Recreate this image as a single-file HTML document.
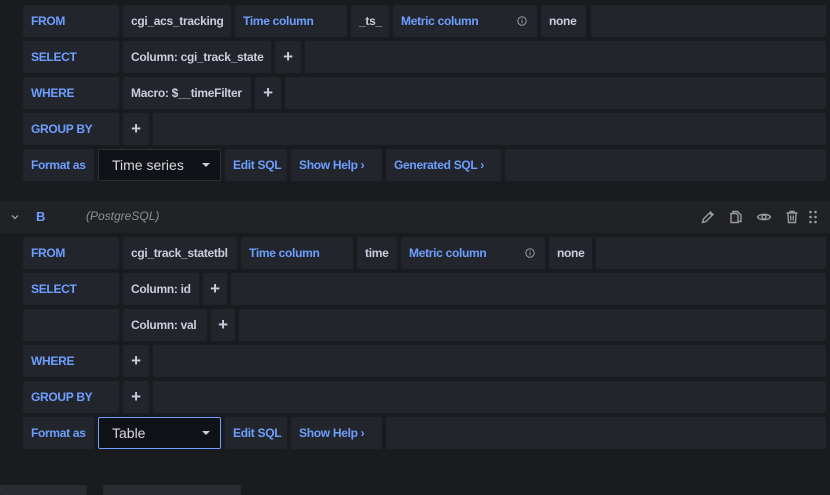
<!DOCTYPE html>
<html><head><meta charset="utf-8"><style>
*{margin:0;padding:0;box-sizing:border-box}
body{width:830px;height:491px;background:#1a1b1f;overflow:hidden;position:relative;font-family:"Liberation Sans",sans-serif;font-size:12px;font-weight:bold;color:#ccccdc;letter-spacing:-0.3px}
.c{position:absolute;height:32px;background:#22252b;border-radius:2px;line-height:32px;padding-left:8px;white-space:nowrap}
.l{color:#6e9fff}
.p{text-align:center;padding-left:0;font-size:17px}
.sel{position:absolute;height:32px;background:#111217;border:1px solid #2c2f35;border-radius:2px;line-height:30px;padding-left:13px;font-size:14px;font-weight:normal;color:#d8d9de;letter-spacing:0}
.sel .a{position:absolute;right:10px;top:13px;width:0;height:0;border-left:4px solid transparent;border-right:4px solid transparent;border-top:4px solid #ccccdc}
.hdr{position:absolute;left:0;top:201px;width:830px;height:32px;background:#202226}
.i{position:absolute;top:8px}
</style></head><body>
<div class="c l" style="left:23px;top:5px;width:96px">FROM</div>
<div class="c" style="left:123px;top:5px;width:108px">cgi_acs_tracking</div>
<div class="c l" style="left:235px;top:5px;width:112px">Time column</div>
<div class="c" style="left:351px;top:5px;width:38px">_ts_</div>
<div class="c l" style="left:393px;top:5px;width:144px">Metric column<svg style="position:absolute;left:124px;top:11px" width="10" height="10" viewBox="0 0 10 10"><circle cx="5" cy="5" r="4.2" fill="none" stroke="#9a9ba1" stroke-width="1"/><rect x="4.5" y="4.3" width="1" height="3" fill="#9a9ba1"/><rect x="4.5" y="2.5" width="1" height="1" fill="#9a9ba1"/></svg></div>
<div class="c" style="left:541px;top:5px;width:45px">none</div>
<div class="c" style="left:591px;top:5px;width:235px"></div>

<div class="c l" style="left:23px;top:41px;width:96px">SELECT</div>
<div class="c" style="left:123px;top:41px;width:148px">Column: cgi_track_state</div>
<div class="c p" style="left:275px;top:41px;width:26px">+</div>
<div class="c" style="left:305px;top:41px;width:521px"></div>

<div class="c l" style="left:23px;top:77px;width:96px">WHERE</div>
<div class="c" style="left:123px;top:77px;width:128px">Macro: $__timeFilter</div>
<div class="c p" style="left:255px;top:77px;width:26px">+</div>
<div class="c" style="left:285px;top:77px;width:541px"></div>

<div class="c l" style="left:23px;top:113px;width:96px">GROUP BY</div>
<div class="c p" style="left:123px;top:113px;width:26px">+</div>
<div class="c" style="left:153px;top:113px;width:673px"></div>

<div class="c l" style="left:23px;top:149px;width:71px">Format as</div>
<div class="sel" style="left:98px;top:149px;width:123px">Time series<span class="a"></span></div>
<div class="c l" style="left:225px;top:149px;width:62px">Edit SQL</div>
<div class="c l" style="left:291px;top:149px;width:91px">Show Help ›</div>
<div class="c l" style="left:386px;top:149px;width:115px">Generated SQL ›</div>
<div class="c" style="left:505px;top:149px;width:321px"></div>

<div class="hdr">
<svg style="position:absolute;left:11px;top:13px" width="8" height="6" viewBox="0 0 8 6"><path d="M1 1.5L4 4.5L7 1.5" fill="none" stroke="#9a9ba1" stroke-width="1.3"/></svg>
<span style="position:absolute;left:36px;top:8px;color:#6e9fff;font-size:13px">B</span>
<span style="position:absolute;left:86px;top:8px;color:#8e8f96;font-style:italic;font-weight:normal;letter-spacing:0">(PostgreSQL)</span>
<svg class="i" style="left:700px" width="16" height="16" viewBox="0 0 16 16" fill="none" stroke="#9a9ba1" stroke-width="1.4"><path d="M2.5 13.5l1-3.5 7-7 2.5 2.5-7 7z M9.5 4l2.5 2.5"/></svg>
<svg class="i" style="left:728px" width="16" height="16" viewBox="0 0 16 16" fill="none" stroke="#9a9ba1" stroke-width="1.4"><path d="M5 4V2.5h4.5L13 6v6.5H10"/><path d="M3 4.5h5.5L10 6v7.5H3z"/></svg>
<svg class="i" style="left:756px" width="16" height="16" viewBox="0 0 16 16" fill="none" stroke="#9a9ba1" stroke-width="1.4"><path d="M1.5 8C3.5 4.5 12.5 4.5 14.5 8 12.5 11.5 3.5 11.5 1.5 8z"/><circle cx="8" cy="8" r="2"/></svg>
<svg class="i" style="left:784px" width="16" height="16" viewBox="0 0 16 16" fill="none" stroke="#9a9ba1" stroke-width="1.4"><path d="M2.5 4h11M6 4V2.5h4V4M4 4l.5 9.5h7L12 4M6.7 6.5v5M9.3 6.5v5"/></svg>
<svg class="i" style="left:807px" width="12" height="16" viewBox="0 0 12 16" fill="#9a9ba1"><circle cx="3.5" cy="3" r="1.3"/><circle cx="8.5" cy="3" r="1.3"/><circle cx="3.5" cy="8" r="1.3"/><circle cx="8.5" cy="8" r="1.3"/><circle cx="3.5" cy="13" r="1.3"/><circle cx="8.5" cy="13" r="1.3"/></svg>
</div>

<div class="c l" style="left:23px;top:237px;width:96px">FROM</div>
<div class="c" style="left:123px;top:237px;width:114px">cgi_track_statetbl</div>
<div class="c l" style="left:241px;top:237px;width:112px">Time column</div>
<div class="c" style="left:357px;top:237px;width:40px">time</div>
<div class="c l" style="left:401px;top:237px;width:144px">Metric column<svg style="position:absolute;left:124px;top:11px" width="10" height="10" viewBox="0 0 10 10"><circle cx="5" cy="5" r="4.2" fill="none" stroke="#9a9ba1" stroke-width="1"/><rect x="4.5" y="4.3" width="1" height="3" fill="#9a9ba1"/><rect x="4.5" y="2.5" width="1" height="1" fill="#9a9ba1"/></svg></div>
<div class="c" style="left:549px;top:237px;width:43px">none</div>
<div class="c" style="left:596px;top:237px;width:230px"></div>

<div class="c l" style="left:23px;top:273px;width:96px">SELECT</div>
<div class="c" style="left:123px;top:273px;width:76px">Column: id</div>
<div class="c p" style="left:203px;top:273px;width:24px">+</div>
<div class="c" style="left:231px;top:273px;width:595px"></div>

<div class="c" style="left:23px;top:309px;width:96px"></div>
<div class="c" style="left:123px;top:309px;width:84px">Column: val</div>
<div class="c p" style="left:211px;top:309px;width:24px">+</div>
<div class="c" style="left:239px;top:309px;width:587px"></div>

<div class="c l" style="left:23px;top:345px;width:96px">WHERE</div>
<div class="c p" style="left:123px;top:345px;width:26px">+</div>
<div class="c" style="left:153px;top:345px;width:673px"></div>

<div class="c l" style="left:23px;top:381px;width:96px">GROUP BY</div>
<div class="c p" style="left:123px;top:381px;width:26px">+</div>
<div class="c" style="left:153px;top:381px;width:673px"></div>

<div class="c l" style="left:23px;top:417px;width:71px">Format as</div>
<div class="sel" style="left:98px;top:417px;width:123px;border-color:#6e9fff">Table<span class="a"></span></div>
<div class="c l" style="left:225px;top:417px;width:62px">Edit SQL</div>
<div class="c l" style="left:291px;top:417px;width:91px">Show Help ›</div>
<div class="c" style="left:386px;top:417px;width:440px"></div>

<div style="position:absolute;left:0;top:485px;width:87px;height:10px;background:#2a2c32;border-radius:2px"></div>
<div style="position:absolute;left:103px;top:485px;width:138px;height:10px;background:#2a2c32;border-radius:2px"></div>
</body></html>
